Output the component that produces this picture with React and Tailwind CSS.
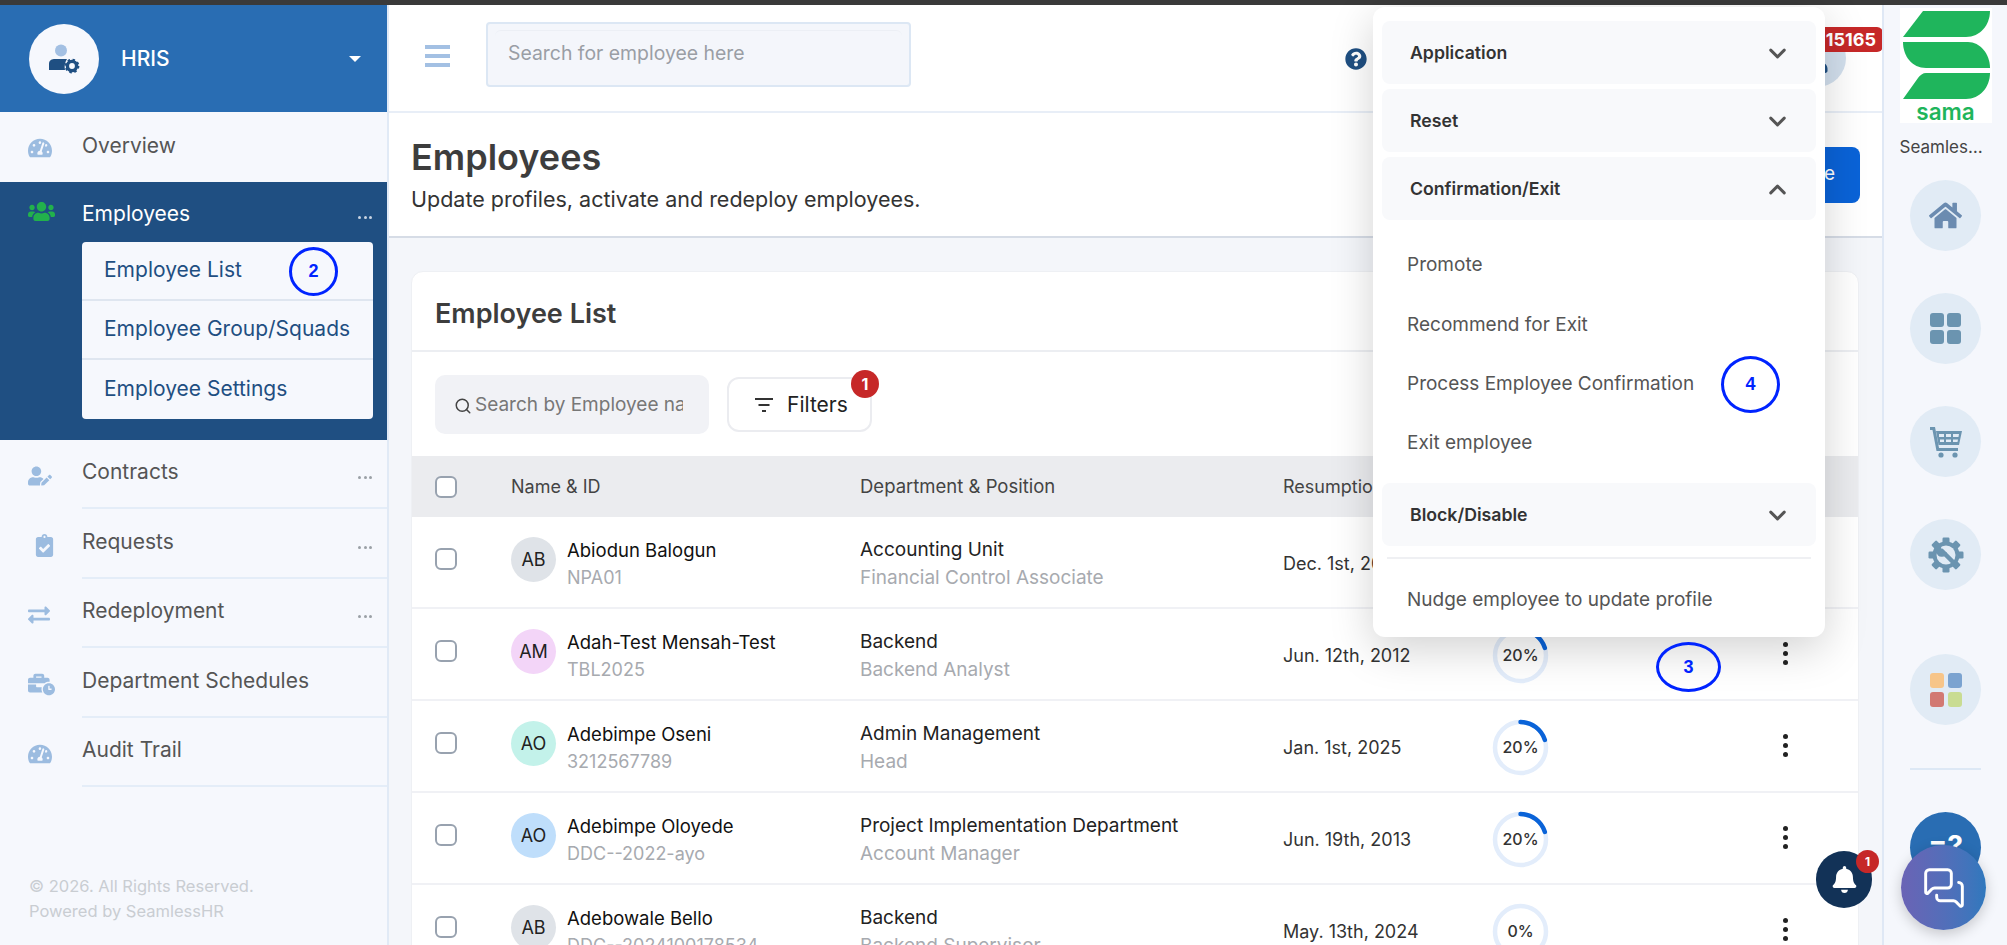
import React from "react";
import { FaTachometerAlt, FaUsers, FaUserEdit, FaClipboardCheck, FaExchangeAlt, FaBusinessTime, FaHome, FaBell, FaQuestionCircle, FaUser } from "react-icons/fa";
import { ChevronDown, ChevronUp, Search, MessagesSquare } from "lucide-react";

const Dots = ({ c = "bg-[#9aa0a6]" }) => (
  <div className="flex gap-[2.5px]">
    <span className={`w-[3px] h-[3px] rounded-full ${c}`} />
    <span className={`w-[3px] h-[3px] rounded-full ${c}`} />
    <span className={`w-[3px] h-[3px] rounded-full ${c}`} />
  </div>
);

const NavRow = ({ icon, label, dots, flush }) => (
  <div className="flex h-[69.5px]">
    <div className="w-[82px] pl-[28px] flex items-center pt-[3px] text-[#9cbce0]">{icon}</div>
    <div className={`flex-1 flex items-center justify-between pr-[15px] pb-[3px] ${flush ? "" : "border-b-2 border-[#e4edf8]"}`}>
      <span className="text-[21px] text-[#555]">{label}</span>
      {dots && <div className="pt-[12px]"><Dots /></div>}
    </div>
  </div>
);

const Sidebar = () => (
  <aside className="w-[389px] shrink-0 bg-[#f6f8fd] border-r-2 border-[#e1eaf6] flex flex-col font-['Inter',sans-serif]">
    <div className="h-[107px] bg-[#296db3] flex items-center pl-[29px] pr-[26px]">
      <div className="w-[70px] h-[70px] rounded-full bg-[#f6f8fd] flex items-center justify-center">
        <svg width="32" height="30" viewBox="0 0 32 30">
          <circle cx="13" cy="6.5" r="6" fill="#a3c0e3" />
          <path d="M1 26 V20 C1 16 4 15 7 15 H19 C17 18 16 22 17 26 Z" fill="#1f4f82" />
          <circle cx="24" cy="22" r="4.6" fill="none" stroke="#1f4f82" strokeWidth="3.4" />
          <circle cx="24" cy="22" r="6.4" fill="none" stroke="#1f4f82" strokeWidth="2" strokeDasharray="2.4 2.6" />
        </svg>
      </div>
      <span className="ml-[22px] pt-[1px] text-[21px] font-medium text-white">HRIS</span>
      <span className="ml-auto w-0 h-0 border-l-[6px] border-r-[6px] border-t-[6px] border-l-transparent border-r-transparent border-t-white" />
    </div>
    <NavRow icon={<FaTachometerAlt size={24} />} label="Overview" flush />
    <div className="h-[258px] bg-[#1f4f82] flex flex-col pl-[82px] pr-[14px]">
      <div className="h-[60px] flex items-center justify-between relative pt-[5px]">
        <span className="text-[21px] text-white">Employees</span>
        <div className="pt-[7px] pr-[1px]"><Dots c="bg-[#c9d4e2]" /></div>
        <FaUsers size={27} className="absolute left-[-54px] top-[16px] text-[#22b14c]" />
      </div>
      <div className="bg-[#f6f8fd] rounded-[4px] text-[#1f4f82] text-[21px] flex flex-col">
        <div className="h-[59px] flex items-center pl-[22px] border-b-2 border-[#dfe6f0]">Employee List</div>
        <div className="h-[59px] flex items-center pl-[22px] border-b-2 border-[#dfe6f0]">Employee Group/Squads</div>
        <div className="h-[59px] flex items-center pl-[22px]">Employee Settings</div>
      </div>
    </div>
    <NavRow icon={<FaUserEdit size={24} />} label="Contracts" dots />
    <NavRow icon={<FaClipboardCheck size={23} className="ml-[5px]" />} label="Requests" dots />
    <NavRow icon={<FaExchangeAlt size={22} />} label="Redeployment" dots />
    <NavRow icon={<FaBusinessTime size={27} />} label="Department Schedules" />
    <NavRow icon={<FaTachometerAlt size={24} />} label="Audit Trail" />
    <div className="mt-[87px] pl-[29px] text-[16.5px] leading-[25px] text-[#c9cdd2]">
      <div>© 2026. All Rights Reserved.</div>
      <div>Powered by SeamlessHR</div>
    </div>
  </aside>
);

const rows = [
  { i: "AB", c: "bg-[#dfe3e8]", n: "Abiodun Balogun", id: "NPA01", d: "Accounting Unit", p: "Financial Control Associate", r: "Dec. 1st, 2021", v: 20 },
  { i: "AM", c: "bg-[#f3d5f8]", n: "Adah-Test Mensah-Test", id: "TBL2025", d: "Backend", p: "Backend Analyst", r: "Jun. 12th, 2012", v: 20 },
  { i: "AO", c: "bg-[#c3f2ea]", n: "Adebimpe Oseni", id: "3212567789", d: "Admin Management", p: "Head", r: "Jan. 1st, 2025", v: 20 },
  { i: "AO", c: "bg-[#bfdefb]", n: "Adebimpe Oloyede", id: "DDC--2022-ayo", d: "Project Implementation Department", p: "Account Manager", r: "Jun. 19th, 2013", v: 20 },
  { i: "AB", c: "bg-[#dfe3e8]", n: "Adebowale Bello", id: "DDC--2024100178534", d: "Backend", p: "Backend Supervisor", r: "May. 13th, 2024", v: 0 },
];

const gridCols = "grid grid-cols-[99px_349px_423px_209px_278px_30px_1fr]";

const Check = () => <div className="ml-[23px] w-[22px] h-[22px] rounded-[6px] border-[2.5px] border-[#98a2af] bg-white" />;

const Ring = ({ v }) => {
  const c = 2 * Math.PI * 25.5;
  return (
    <div className="relative w-[57px] h-[57px] flex items-center justify-center mt-[2px]">
      <svg width="57" height="57" className="absolute inset-0 -rotate-90">
        <circle cx="28.5" cy="28.5" r="25.5" fill="none" stroke="#e3edfb" strokeWidth="4.5" />
        {v > 0 && (
          <circle cx="28.5" cy="28.5" r="25.5" fill="none" stroke="#0a63d8" strokeWidth="4.5" strokeLinecap="round" strokeDasharray={`${(c * v) / 100} ${c}`} />
        )}
      </svg>
      <span className="relative text-[16px] font-medium text-[#333]">{v}%</span>
    </div>
  );
};

const Row = ({ r }) => (
  <div className={`${gridCols} h-[92px] items-center border-b-2 border-[#f0f1f5]`}>
    <div className="-mt-[6px]"><Check /></div>
    <div className="flex items-center relative">
      <div className={`w-[45px] h-[45px] rounded-full ${r.c} flex items-center justify-center text-[18px] text-[#222] -mt-[6px]`}>{r.i}</div>
      <div className="ml-[11px] mt-[3px] text-[18px] leading-[28px]">
        <div className="text-[18.5px] text-[#111]">{r.n}</div>
        <div className="text-[#a7aaaf]">{r.id}</div>
      </div>
    </div>
    <div className="mt-[3px] text-[19px] leading-[28px]">
      <div className="text-[#222]">{r.d}</div>
      <div className="text-[#a7aaaf]">{r.p}</div>
    </div>
    <div className="mt-[2px] text-[18px] text-[#333]">{r.r}</div>
    <Ring v={r.v} />
    <div className="-mt-[1px] flex flex-col items-center gap-[4px]">
      <span className="w-[5px] h-[5px] rounded-full bg-[#222]" />
      <span className="w-[5px] h-[5px] rounded-full bg-[#222]" />
      <span className="w-[5px] h-[5px] rounded-full bg-[#222]" />
    </div>
    <div />
  </div>
);

const Main = () => (
  <main className="w-[1493px] shrink-0 bg-[#f4f6fa] flex flex-col overflow-hidden font-['Inter',sans-serif]">
    <div className="h-[108px] shrink-0 bg-white border-b-2 border-[#e8eef7] flex items-center pl-[36px] pr-[36px]">
      <div className="flex flex-col gap-[5px] w-[25px] mb-[5px]">
        <span className="h-[4px] bg-[#a3c0e3]" />
        <span className="h-[4px] bg-[#a3c0e3]" />
        <span className="h-[4px] bg-[#a3c0e3]" />
      </div>
      <div className="ml-[36px] w-[425px] h-[65px] mb-[8px] rounded-[4px] bg-[#f4f6fb] border-2 border-[#dce7f4] pt-[6px] px-[7px]">
        <div className="h-[48px] rounded-[6px] border-t border-[#eceff5] pl-[13px] flex items-center text-[19.4px] text-[#9a9ea5]">Search for employee here</div>
      </div>
      <FaQuestionCircle size={22} className="ml-auto mt-[2px] text-[#1f4f82]" />
      <div className="relative ml-[421px] w-[58px] h-[58px] rounded-full bg-[#d3e0ee] flex items-center justify-center">
        <FaUser size={24} className="text-[#1f4f82] mt-[6px]" />
        <span className="absolute -top-[2px] -right-[37px] w-[82px] h-[25px] rounded-[6px] bg-[#c62828] text-white font-bold text-[18px] flex items-center justify-end pr-[7px]">15165</span>
      </div>
    </div>
    <div className="h-[125px] shrink-0 bg-white border-b-2 border-[#d6dce6] flex items-center justify-between pl-[22px] pr-[22px]">
      <div className="mb-[2px]">
        <h1 className="text-[36px] leading-[44px] font-semibold text-[#3d3d3d]">Employees</h1>
        <p className="mt-[6px] text-[21.5px] leading-[28px] text-[#333]">Update profiles, activate and redeploy employees.</p>
      </div>
      <button className="w-[190px] h-[56px] rounded-[8px] bg-[#0a63d8] text-white text-[19px] flex items-center justify-end pr-[25px]">Add Employee</button>
    </div>
    <div className="ml-[22px] mr-[23px] mt-[33px] bg-white rounded-t-[12px] border border-[#eef0f4] flex flex-col">
      <div className="h-[80px] flex items-center px-[23px] pt-[6px] border-b-2 border-[#eceef2]">
        <h2 className="text-[27px] font-semibold text-[#3d3d3d]">Employee List</h2>
      </div>
      <div className="h-[104px] flex items-center pl-[23px] gap-[18px]">
        <div className="w-[274px] h-[59px] rounded-[10px] bg-[#f1f2f6] flex items-center pl-[19px] pr-[26px] pt-[3px] text-[19px] text-[#777] overflow-hidden">
          <Search size={18} className="shrink-0 text-[#444]" />
          <span className="ml-[3px] whitespace-nowrap overflow-hidden">Search by Employee name</span>
        </div>
        <div className="relative w-[145px] h-[55px] rounded-[12px] border-2 border-[#ebecf0] flex items-center pl-[25px] pt-[2px] text-[21px] text-[#222]">
          <svg width="20" height="16" viewBox="0 0 20 16" className="mr-[13px]" stroke="#333" strokeWidth="2">
            <path d="M1 2 H19 M4.5 8 H15.5 M8 14 H12" />
          </svg>
          Filters
          <span className="absolute -top-[9px] -right-[9px] w-[28px] h-[28px] rounded-full bg-[#c62828] text-white text-[16px] font-bold flex items-center justify-center">1</span>
        </div>
      </div>
      <div className={`${gridCols} h-[61px] items-center bg-[#ebecef] text-[18px] text-[#444]`}>
        <Check />
        <div>Name &amp; ID</div>
        <div className="text-[18.5px]">Department &amp; Position</div>
        <div>Resumption Date</div>
      </div>
      {rows.map((r, i) => <Row key={i} r={r} />)}
    </div>
  </main>
);

const Tile = ({ children }) => (
  <div className="w-[71px] h-[71px] rounded-full bg-[#e1ebf5] flex items-center justify-center">{children}</div>
);

const RightPanel = () => (
  <aside className="w-[125px] shrink-0 bg-[#f5f7fc] border-l-2 border-[#dfe8f5] flex flex-col items-center font-['Inter',sans-serif]">
    <div className="mt-[3px] w-[92px] h-[115px] bg-white flex flex-col items-center">
      <svg width="92" height="93" viewBox="0 0 92 93" fill="#1fb55c">
        <path d="M23 3 H90 C90 17 80 29 66 29 H3 Z" />
        <path d="M3 34 H68 C80 34 90 46 90 60 H26 C12 60 3 48 3 34 Z" />
        <path d="M26 65 H90 C90 79 80 91 66 91 H3 L18 70 C20 67 23 65 26 65 Z" />
      </svg>
      <span className="text-[22.5px] leading-[22px] font-semibold text-[#1fb55c]">sama</span>
    </div>
    <div className="mt-[12px] text-[17px] leading-[24px] text-[#444] w-[92px] truncate">Seamless HR</div>
    <div className="mt-[21px] flex flex-col gap-[42px]">
      <Tile><FaHome size={33} className="text-[#6b8bb0]" /></Tile>
      <Tile>
        <div className="grid grid-cols-2 gap-[3px]">
          {[0, 1, 2, 3].map((i) => <span key={i} className="w-[14px] h-[14px] rounded-[3px] bg-[#6b94b0]" />)}
        </div>
      </Tile>
      <Tile>
        <svg width="34" height="32" viewBox="0 0 34 32" fill="#6b94b0">
          <path d="M1 1 H6 L10 22 H29 V25 H7.5 L3.5 4 H1 Z" />
          <path d="M7 5 H33 L30 19 H9.5 Z M10 8 V11 H15 V8 Z M17 8 V11 H22 V8 Z M24 8 V11 H29.5 L30 8 Z M11 13.5 V16 H15 V13.5 Z M17 13.5 V16 H22 V13.5 Z M24 13.5 V16 H28.5 L29 13.5 Z" fillRule="evenodd" />
          <circle cx="12" cy="29" r="2.6" />
          <circle cx="26" cy="29" r="2.6" />
        </svg>
      </Tile>
      <Tile>
        <svg width="36" height="36" viewBox="0 0 36 36">
          <g fill="#6b94b0">
            {[0, 45, 90, 135, 180, 225, 270, 315].map((a) => (
              <rect key={a} x="14.5" y="0.5" width="7" height="8" rx="1.2" transform={`rotate(${a} 18 18)`} />
            ))}
            <circle cx="18" cy="18" r="13.5" />
          </g>
          <circle cx="18" cy="18" r="9.5" fill="#e1ebf5" />
          <path d="M14 14 L25 25" stroke="#6b94b0" strokeWidth="4.5" strokeLinecap="round" />
          <path d="M13 9.5 A5.2 5.2 0 1 0 19 15.5 L15.5 15 L13.5 13 Z" fill="#6b94b0" />
        </svg>
      </Tile>
    </div>
    <div className="mt-[64px]">
      <Tile>
        <div className="grid grid-cols-2 gap-[4px]">
          <span className="w-[14px] h-[15px] rounded-[3px] bg-[#f7c589]" />
          <span className="w-[14px] h-[15px] rounded-[3px] bg-[#7ba3d0]" />
          <span className="w-[14px] h-[15px] rounded-[3px] bg-[#d27973]" />
          <span className="w-[14px] h-[15px] rounded-[3px] bg-[#c9dc92]" />
        </div>
      </Tile>
    </div>
    <div className="mt-[43px] w-[71px] border-t-2 border-[#dde8f5]" />
    <div className="mt-[42px] w-[71px] h-[71px] rounded-full bg-[#296db3] flex items-start justify-center pt-[17px] text-white font-bold text-[28px] leading-[34px]">=?</div>
  </aside>
);

const Dropdown = () => {
  const Head = ({ label, open }) => (
    <div className="h-[63px] rounded-[8px] bg-[#f8f9fb] flex items-center justify-between pl-[28px] pr-[25px] pt-[2px] text-[17.7px] font-semibold text-[#333]">
      {label}
      {open ? <ChevronUp size={27} strokeWidth={2.6} className="text-[#555]" /> : <ChevronDown size={27} strokeWidth={2.6} className="text-[#555]" />}
    </div>
  );
  const Item = ({ label }) => <div className="h-[59.3px] flex items-center pl-[25px] text-[19px] text-[#555]">{label}</div>;
  return (
    <div className="absolute left-[1373px] top-[7px] w-[452px] h-[630px] bg-white rounded-[12px] shadow-[0_12px_44px_rgba(0,0,0,0.18)] px-[9px] pt-[14px] flex flex-col font-['Inter',sans-serif]">
      <div className="flex flex-col gap-[5px]">
        <Head label="Application" />
        <Head label="Reset" />
        <Head label="Confirmation/Exit" open />
      </div>
      <div className="mt-[16px]">
        <Item label="Promote" />
        <Item label="Recommend for Exit" />
        <Item label="Process Employee Confirmation" />
        <Item label="Exit employee" />
      </div>
      <div className="mt-[10px]"><Head label="Block/Disable" /></div>
      <div className="mt-[11px] mx-[5px] border-t-2 border-[#eff0f3]" />
      <div className="mt-[11px]"><Item label="Nudge employee to update profile" /></div>
    </div>
  );
};

const Mark = ({ n, cls }) => (
  <div className={`absolute rounded-[50%] border-[3px] border-[#0024ff] text-[#0024ff] font-bold text-[18px] flex items-center justify-center font-['Liberation_Sans',sans-serif] ${cls}`}>{n}</div>
);

export default function App() {
  return (
    <div className="relative w-[2007px] h-[945px] overflow-hidden bg-white flex flex-col">
      <div className="h-[5px] shrink-0 bg-[#3a3a3a]" />
      <div className="flex flex-1 min-h-0">
        <Sidebar />
        <Main />
        <RightPanel />
      </div>
      <Dropdown />
      <Mark n="2" cls="left-[289px] top-[247px] w-[49px] h-[49px]" />
      <Mark n="3" cls="left-[1656px] top-[642px] w-[65px] h-[50px]" />
      <Mark n="4" cls="left-[1721px] top-[356px] w-[59px] h-[57px]" />
      <div className="absolute left-[1816px] top-[851px] w-[56px] h-[57px] rounded-full bg-[#123257] flex items-center justify-center">
        <FaBell size={27} className="text-white" />
        <span className="absolute -top-[1px] -right-[7px] w-[23px] h-[23px] rounded-full bg-[#c62828] text-white text-[12px] font-bold flex items-center justify-center font-['Inter',sans-serif]">1</span>
      </div>
      <div className="absolute left-[1901px] top-[845px] w-[85px] h-[85px] rounded-full bg-gradient-to-r from-[#6a63b5] to-[#2f78bd] shadow-[0_4px_14px_rgba(0,0,0,0.2)] flex items-center justify-center">
        <MessagesSquare size={44} strokeWidth={1.6} className="text-white" />
      </div>
    </div>
  );
}
